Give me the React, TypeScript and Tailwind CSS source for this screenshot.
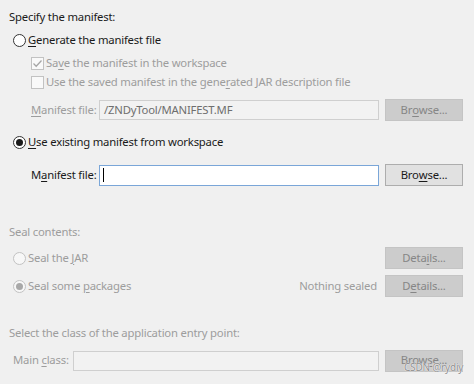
import React from "react";

const font = { fontFamily: '"Noto Sans", "Open Sans", Arial, sans-serif', letterSpacing: "-0.2px" };

function Radio({ checked, disabled }: { checked?: boolean; disabled?: boolean }) {
  return (
    <span
      className={
        "flex h-[13px] w-[13px] shrink-0 items-center justify-center rounded-full border " +
        (disabled ? "border-[#c2c2c2] bg-[#f7f7f7]" : "border-[#333333] bg-white")
      }
    >
      {checked && (
        <span className={"h-[7px] w-[7px] rounded-full " + (disabled ? "bg-[#a8a8a8]" : "bg-[#1a1a1a]")} />
      )}
    </span>
  );
}

function Check({ checked }: { checked?: boolean }) {
  return (
    <span className="flex h-[13px] w-[13px] shrink-0 items-center justify-center border border-[#c2c2c2] bg-[#f9f9f9]">
      {checked && (
        <svg width="11" height="11" viewBox="0 0 11 11">
          <path d="M1.5 5.5 L4.2 8.2 L9.5 2.5" fill="none" stroke="#a6a6a6" strokeWidth="1.3" />
        </svg>
      )}
    </span>
  );
}

function Btn({ children, disabled }: { children: React.ReactNode; disabled?: boolean }) {
  return (
    <div
      className={
        "flex h-[22px] w-[78px] shrink-0 items-center justify-center border text-[11.3px] " +
        (disabled
          ? "border-[#c4c4c4] bg-[#cccccc] text-[#868686]"
          : "border-[#adadad] bg-[#e1e1e1] text-[#1a1a1a]")
      }
    >
      {children}
    </div>
  );
}

const U = ({ children }: { children: React.ReactNode }) => (
  <span className="underline decoration-1 underline-offset-2">{children}</span>
);

export default function App() {
  return (
    <div
      className="relative h-[384px] w-[474px] overflow-hidden bg-[#f0f0f0] text-[11.3px] text-[#1a1a1a]"
      style={font}
    >
      <div className="flex flex-col pl-[9px] pr-[11px] pt-[7px] whitespace-nowrap">
        <div className="flex h-[20px] items-center">Specify the manifest:</div>

        <div className="mt-[3px] flex h-[20px] items-center pl-[4px]">
          <Radio />
          <span className="ml-[2px]">
            <U>G</U>enerate the manifest file
          </span>
        </div>

        <div className="mt-[4px] flex h-[18px] items-center pl-[22px] text-[#9d9d9d]">
          <Check checked />
          <span className="ml-[2px]">
            Sa<U>v</U>e the manifest in the workspace
          </span>
        </div>

        <div className="mt-[1px] flex h-[18px] items-center pl-[22px] text-[#9d9d9d]">
          <Check />
          <span className="ml-[2px]">
            Use the saved manifest in the gene<U>r</U>ated JAR description file
          </span>
        </div>

        <div className="mt-[8px] flex h-[22px] items-center pl-[22px]">
          <span className="w-[68px] shrink-0 text-[#9d9d9d]">
            <U>M</U>anifest file:
          </span>
          <div className="flex h-[20px] w-[280px] shrink-0 items-center border border-[#cfcfcf] bg-[#f2f2f2] px-[4px] text-[#6e6e6e]">
            /ZNDyTool/MANIFEST.MF
          </div>
          <div className="ml-auto">
            <Btn disabled>
              Br<U>o</U>wse...
            </Btn>
          </div>
        </div>

        <div className="mt-[11px] flex h-[20px] items-center pl-[4px]">
          <Radio checked />
          <span className="ml-[2px]">
            <U>U</U>se existing manifest from workspace
          </span>
        </div>

        <div className="mt-[12px] flex h-[22px] items-center pl-[22px]">
          <span className="w-[68px] shrink-0">
            M<U>a</U>nifest file:
          </span>
          <div className="flex h-[21px] w-[280px] shrink-0 items-center border border-[#7aa6d8] bg-white px-[3px]">
            <span className="h-[14px] w-[1px] bg-black" />
          </div>
          <div className="ml-auto">
            <Btn>
              Bro<U>w</U>se...
            </Btn>
          </div>
        </div>

        <div className="mt-[36px] flex h-[20px] items-center text-[#9d9d9d]">Seal contents:</div>

        <div className="mt-[6px] flex h-[20px] items-center pl-[4px] text-[#9d9d9d]">
          <Radio disabled />
          <span className="ml-[2px]">
            Seal the <U>J</U>AR
          </span>
          <div className="ml-auto">
            <Btn disabled>
              Deta<U>i</U>ls...
            </Btn>
          </div>
        </div>

        <div className="mt-[7px] flex h-[22px] items-center pl-[4px] text-[#9d9d9d]">
          <Radio checked disabled />
          <span className="ml-[2px]">
            Seal some <U>p</U>ackages
          </span>
          <div className="ml-auto flex items-center">
            <span className="mr-[8px]">Nothing sealed</span>
            <Btn disabled>
              D<U>e</U>tails...
            </Btn>
          </div>
        </div>

        <div className="mt-[26px] flex h-[20px] items-center text-[#9d9d9d]">
          Select the class of the application entry point:
        </div>

        <div className="mt-[7px] flex h-[21px] items-center pl-[4px] text-[#9d9d9d]">
          <span className="w-[60px] shrink-0">
            Main <U>c</U>lass:
          </span>
          <div className="h-[20px] w-[306px] shrink-0 border border-[#cfcfcf] bg-[#f2f2f2]" />
          <div className="ml-auto">
            <Btn disabled>
              Brow<U>s</U>e...
            </Btn>
          </div>
        </div>
      </div>

      <div
        className="absolute left-[404px] top-[361px] text-[10px] leading-[12px] text-[#8e8e8e]"
        style={{ textShadow: "0 0 1px #ffffff, 0 0 1px #ffffff" }}
      >
        CSDN @rydiy
      </div>
    </div>
  );
}
